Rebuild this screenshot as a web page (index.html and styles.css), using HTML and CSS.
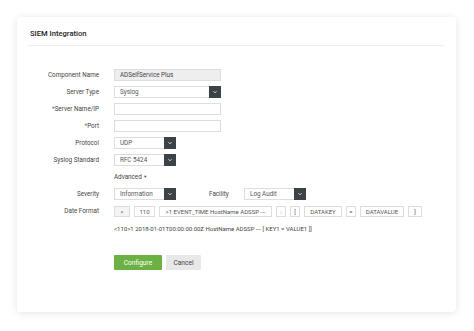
FILE: index.html
```html
<!DOCTYPE html>
<html lang="en">
<head>
    <meta charset="UTF-8">
    <meta name="viewport" content="width=device-width, initial-scale=1.0">
    <title>SIEM Integration</title>
    <link rel="stylesheet" href="styles.css">
</head>
<body>
    <div class="card">
        <div class="card-header">SIEM Integration</div>
        <div class="form">
            <div class="form-row">
                <label class="form-label">Component Name</label>
                <div class="field field-wide field-readonly">ADSelfService Plus</div>
            </div>
            <div class="form-row">
                <label class="form-label">Server Type</label>
                <div class="field field-wide select">Syslog<span class="caret"><svg viewBox="0 0 10 10" width="6" height="6"><path d="M2.5 3.8 L5 6.3 L7.5 3.8" fill="none" stroke="#fff" stroke-width="1.4"/></svg></span></div>
            </div>
            <div class="form-row">
                <label class="form-label"><span class="req">*</span>Server Name/IP</label>
                <div class="field field-wide"></div>
            </div>
            <div class="form-row">
                <label class="form-label"><span class="req">*</span>Port</label>
                <div class="field field-wide"></div>
            </div>
            <div class="form-row">
                <label class="form-label">Protocol</label>
                <div class="field field-small select">UDP<span class="caret"><svg viewBox="0 0 10 10" width="6" height="6"><path d="M2.5 3.8 L5 6.3 L7.5 3.8" fill="none" stroke="#fff" stroke-width="1.4"/></svg></span></div>
            </div>
            <div class="form-row">
                <label class="form-label">Syslog Standard</label>
                <div class="field field-small select">RFC 5424<span class="caret"><svg viewBox="0 0 10 10" width="6" height="6"><path d="M2.5 3.8 L5 6.3 L7.5 3.8" fill="none" stroke="#fff" stroke-width="1.4"/></svg></span></div>
            </div>
            <div class="form-row">
                <span class="form-label"></span>
                <span class="advanced">Advanced <span class="tri">&#9660;</span></span>
            </div>
            <div class="form-row">
                <label class="form-label">Severity</label>
                <div class="field field-small select">Information<span class="caret"><svg viewBox="0 0 10 10" width="6" height="6"><path d="M2.5 3.8 L5 6.3 L7.5 3.8" fill="none" stroke="#fff" stroke-width="1.4"/></svg></span></div>
                <label class="facility-label">Facility</label>
                <div class="field field-small select">Log Audit<span class="caret"><svg viewBox="0 0 10 10" width="6" height="6"><path d="M2.5 3.8 L5 6.3 L7.5 3.8" fill="none" stroke="#fff" stroke-width="1.4"/></svg></span></div>
            </div>
            <div class="form-row">
                <label class="form-label">Date Format</label>
                <div class="chips">
                    <span class="chip chip-lt">&lt;</span>
                    <span class="chip chip-pri">110</span>
                    <span class="chip chip-head">&gt;1 EVENT_TIME HostName ADSSP ---</span>
                    <span class="chip chip-sym">:</span>
                    <span class="chip chip-sym">[</span>
                    <span class="chip chip-key">DATAKEY</span>
                    <span class="chip chip-sym">=</span>
                    <span class="chip chip-val">DATAVALUE</span>
                    <span class="chip chip-end">]</span>
                </div>
            </div>
            <div class="form-row">
                <span class="form-label"></span>
                <span class="preview">&lt;110&gt;1 2018-01-01T00:00:00:00Z HostName ADSSP --- [ KEY1 = VALUE1 ]]</span>
            </div>
            <div class="form-row row-actions">
                <span class="form-label"></span>
                <button class="btn btn-primary">Configure</button>
                <button class="btn btn-cancel">Cancel</button>
            </div>
        </div>
    </div>
</body>
</html>
```

FILE: styles.css
```css
body {
    font-family: Roboto, "Liberation Sans", sans-serif;
    background: #fff;
    color: #444;
    margin: 0;
    padding: 17px;
}
.card {
    width: 439px;
    height: 295px;
    box-sizing: border-box;
    background-color: #fff;
    border-radius: 4px;
    box-shadow: 0 1px 9px rgba(0, 0, 0, 0.11);
}
.card-header {
    margin: 0 12px 0 11px;
    padding: 12px 2px 7px;
    font-size: 7.6px;
    font-weight: 500;
    color: #222;
    border-bottom: 1px solid #eee;
}
.form {
    padding-top: 23px;
    font-size: 6.3px;
}
.form-row {
    display: flex;
    align-items: center;
    height: 12px;
    margin-bottom: 5px;
}
.form-label {
    width: 82px;
    margin-right: 15px;
    text-align: right;
    color: #444;
    flex-shrink: 0;
}
.req {
    color: #777;
}
.field {
    position: relative;
    height: 12px;
    box-sizing: border-box;
    border: 1px solid #ddd;
    padding-left: 5px;
    line-height: 10px;
    color: #555;
    background: #fff;
}
.field-wide {
    width: 107px;
}
.field-small {
    width: 62px;
}
.field-readonly {
    background: #eee;
    color: #444;
}
.caret {
    position: absolute;
    top: -1px;
    right: -1px;
    width: 12px;
    height: 12px;
    background: #3b4347;
    display: flex;
    align-items: center;
    justify-content: center;
}
.advanced {
    color: #444;
}
.tri {
    font-size: 4px;
    vertical-align: 1px;
}
.facility-label {
    margin-left: 33px;
    margin-right: 15px;
    width: 20px;
}
.chips {
    display: flex;
    gap: 4px;
}
.chip {
    height: 11px;
    box-sizing: border-box;
    border: 1px solid #ddd;
    line-height: 9px;
    text-align: center;
    color: #555;
    font-size: 6px;
}
.chip-lt { width: 16px; background: #f4f4f4; }
.chip-pri { width: 21px; }
.chip-head { width: 113px; }
.chip-sym { width: 10px; }
.chip-key { width: 38px; }
.chip-val { width: 44px; }
.chip-end { width: 14px; }
.preview {
    font-size: 6px;
    color: #444;
}
.row-actions {
    margin-top: 21px;
    height: 15px;
}
.btn {
    height: 15px;
    border: none;
    border-radius: 1px;
    font-family: inherit;
    font-size: 6.6px;
    padding: 0;
    margin-right: 4px;
    cursor: pointer;
}
.btn-primary {
    width: 48px;
    background-color: #6bb144;
    color: #fff;
}
.btn-cancel {
    width: 35px;
    background-color: #e8e8e8;
    color: #444;
}
```
